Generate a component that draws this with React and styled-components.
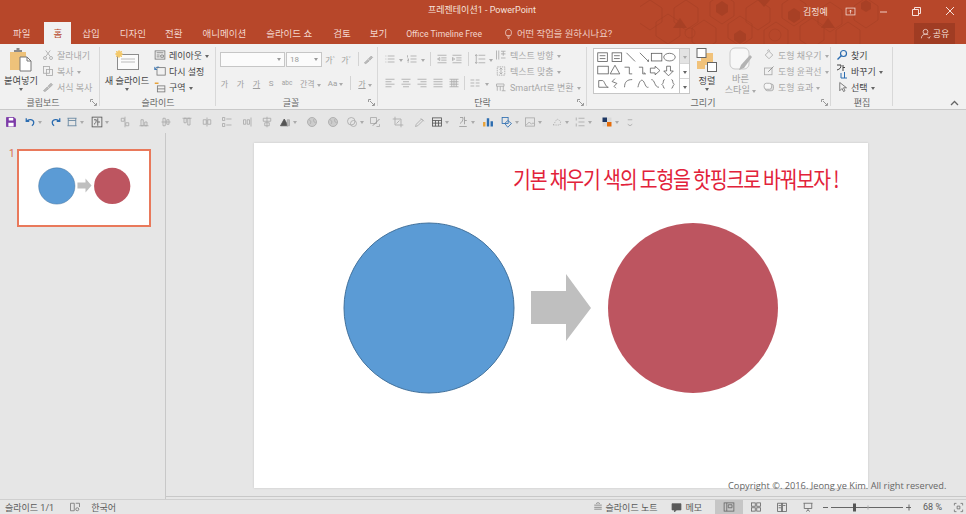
import React from 'react'
import styled, { createGlobalStyle } from 'styled-components'

const GlobalStyle = createGlobalStyle`
  html, body { margin: 0; padding: 0; background: #e6e6e6; }
  body { font-family: Roboto, "Noto Sans CJK KR", "Noto Sans", sans-serif; }
`

const Window = styled.div`
  width: 966px;
  height: 514px;
  display: flex;
  flex-direction: column;
  overflow: hidden;
  color: #444;
`

const TitleBar = styled.div`
  position: relative;
  height: 22px;
  flex: none;
  background: #b7472a;
  display: flex;
  align-items: center;
  justify-content: flex-end;
  color: #f6e2dc;
  font-size: 9px;
`

const Honey = styled.svg`
  position: absolute;
  left: 640px;
  top: 0;
  width: 250px;
  height: 44px;
  z-index: 1;
  pointer-events: none;
`

const TitleText = styled.div`
  position: absolute;
  left: 428px;
  top: 4px;
  line-height: 13px;
  white-space: nowrap;
  z-index: 2;
`

const TitleControls = styled.div`
  display: flex;
  align-items: center;
  z-index: 2;
`

const UserName = styled.span`
  width: 31px;
`

const WinButton = styled.div`
  width: 33px;
  display: flex;
  justify-content: center;
`

const TabRow = styled.div`
  height: 22px;
  flex: none;
  background: #b7472a;
  display: flex;
  align-items: stretch;
  padding-left: 3px;
  position: relative;
`

const Tab = styled.div`
  position: relative;
  z-index: 2;
  padding: 0 ${p => p.$pad ?? 10}px;
  margin-right: ${p => p.$gap ?? 0}px;
  font-size: ${p => p.$size ?? 9.5}px;
  line-height: 24px;
  white-space: nowrap;
  color: ${p => (p.$active ? '#b7472a' : '#f3d6cd')};
  background: ${p => (p.$active ? '#f1f1f1' : 'transparent')};
`

const TellMe = styled.div`
  display: flex;
  align-items: center;
  gap: 3px;
  margin-left: 11px;
  font-size: 9.4px;
  color: #f0cdc2;
  z-index: 2;
`

const ShareButton = styled.div`
  position: absolute;
  z-index: 2;
  right: 11px;
  top: 1px;
  width: 41px;
  height: 21px;
  background: #a03c23;
  color: #f6e2dc;
  font-size: 9px;
  display: flex;
  align-items: center;
  justify-content: center;
  gap: 2px;
`

const Ribbon = styled.div`
  position: relative;
  height: 66px;
  flex: none;
  background: #f1f1f1;
  border-bottom: 1px solid #c9c9c9;
  box-sizing: border-box;
  display: flex;
`

const Group = styled.div`
  width: ${p => p.$w}px;
  flex: none;
  box-sizing: border-box;
  display: flex;
  flex-direction: column;
  padding-top: 3px;
  position: relative;
  &::after {
    content: '';
    position: absolute;
    right: 0;
    top: 3px;
    bottom: 3px;
    width: 1px;
    background: #d8d8d8;
  }
`

const GroupBody = styled.div`
  flex: 1;
  min-height: 0;
  display: flex;
  gap: ${p => p.$gap ?? 0}px;
  padding-left: ${p => p.$left ?? 0}px;
`

const GroupLabel = styled.div`
  height: 14px;
  flex: none;
  line-height: 16px;
  text-align: center;
  font-size: 9px;
  color: #666;
  position: relative;
  padding-right: ${p => p.$shift ?? 0}px;
`

const Launcher = styled.svg`
  position: absolute;
  right: 3px;
  top: 4px;
  width: 7px;
  height: 7px;
`

const BigButton = styled.div`
  width: ${p => p.$w}px;
  flex: none;
  display: flex;
  flex-direction: column;
  align-items: center;
  font-size: 9.2px;
  line-height: 11px;
  text-align: center;
  white-space: nowrap;
  color: ${p => (p.$off ? '#a2a2a2' : '#444')};
`

const BigIcon = styled.div`
  height: 26px;
  display: flex;
  align-items: center;
  margin-bottom: 2px;
`

const Stack = styled.div`
  display: flex;
  flex-direction: column;
  padding-top: ${p => p.$top ?? 0}px;
  margin-left: ${p => p.$left ?? 0}px;
`

const SmallRow = styled.div`
  height: 16px;
  display: flex;
  align-items: center;
  gap: 3px;
  white-space: nowrap;
  font-size: 9px;
  color: ${p => (p.$off ? '#a8a8a8' : '#444')};
`

const ToolRow = styled.div`
  height: ${p => p.$h ?? 26}px;
  display: flex;
  align-items: center;
  gap: ${p => p.$gap ?? 3}px;
  white-space: nowrap;
  font-size: 8px;
  color: #a0a0a0;
`

const Field = styled.div`
  width: ${p => p.$w}px;
  height: 15px;
  box-sizing: border-box;
  border: 1px solid #c6c6c6;
  background: #fbfbfb;
  font-size: 8px;
  line-height: 13px;
  padding-left: 3px;
  color: #9a9a9a;
  position: relative;
  &::after {
    content: '';
    position: absolute;
    right: 3px;
    top: 5px;
    border: 2px solid transparent;
    border-top: 3px solid #999;
  }
`

const Glyph = styled.span`
  width: ${p => p.$w ?? 9}px;
  font-size: ${p => p.$size ?? 8}px;
  text-align: center;
  text-decoration: ${p => (p.$under ? 'underline' : 'none')};
`

const Sep = styled.div`
  width: 1px;
  height: 14px;
  margin: 0 ${p => p.$m ?? 2}px;
  background: #d3d3d3;
`

const Caret = styled.span`
  display: inline-block;
  width: 0;
  height: 0;
  flex: none;
  margin-top: 2px;
  border: 2px solid transparent;
  border-bottom-width: 0;
  border-top: 3px solid ${p => (p.$off ? '#ababab' : '#666')};
`

const GalleryWrap = styled.div`
  display: flex;
  height: 46px;
  margin-top: 1px;
`

const Gallery = styled.svg`
  width: 87px;
  height: 46px;
  background: #fff;
  border: 1px solid #c6c6c6;
  box-sizing: border-box;
`

const GalleryScroll = styled.div`
  width: 10px;
  display: flex;
  flex-direction: column;
  border: 1px solid #c6c6c6;
  border-left: 0;
  box-sizing: border-box;
`

const ScrollCell = styled.div`
  flex: 1;
  display: flex;
  align-items: center;
  justify-content: center;
  background: ${p => (p.$off ? '#e3e3e3' : '#fff')};
  & + & { border-top: 1px solid #d6d6d6; }
`

const Collapse = styled.svg`
  position: absolute;
  right: 7px;
  bottom: 3px;
  width: 9px;
  height: 6px;
`

const Qat = styled.div`
  height: 23px;
  flex: none;
  background: #e6e6e6;
  display: flex;
  align-items: center;
  padding-left: 5px;
`

const QatItem = styled.div`
  width: ${p => p.$w}px;
  flex: none;
  display: flex;
  align-items: center;
  gap: 2px;
`

const Main = styled.div`
  flex: 1;
  min-height: 0;
  display: flex;
  background: #e6e6e6;
`

const Sidebar = styled.div`
  width: 166px;
  flex: none;
  box-sizing: border-box;
  border-right: 1px solid #c8c8c8;
  display: flex;
  align-items: flex-start;
  padding: 16px 0 0 9px;
  gap: 2px;
`

const SlideNo = styled.div`
  width: 6px;
  font-size: 10px;
  line-height: 12px;
  margin-top: -1px;
  color: #d9694a;
`

const Thumb = styled.svg`
  width: 134px;
  height: 78px;
  box-sizing: border-box;
  border: 2.5px solid #e9795b;
  background: #fff;
`

const Stage = styled.div`
  flex: 1;
  display: flex;
  align-items: flex-start;
  padding: 10px 0 0 88px;
  margin-bottom: 2px;
  border-bottom: 1px solid #c8c8c8;
`

const Slide = styled.div`
  position: relative;
  width: 614px;
  height: 345px;
  background: #fff;
  box-shadow: 0 0 2px #c4c4c4;
`

const SlideArt = styled.svg`
  display: block;
  width: 614px;
  height: 345px;
`

const Headline = styled.div`
  position: absolute;
  left: 259px;
  top: 18px;
  font-family: "Noto Sans CJK KR", sans-serif;
  font-size: 23px;
  line-height: 34px;
  letter-spacing: -1.35px;
  white-space: nowrap;
  color: #e2223a;
  transform: scaleX(0.844);
  transform-origin: left center;
`

const Copyright = styled.div`
  position: absolute;
  left: 474px;
  top: 336px;
  font-family: "Open Sans", "Noto Sans", sans-serif;
  font-size: 9.25px;
  line-height: 14px;
  white-space: nowrap;
  color: #666;
`

const StatusBar = styled.div`
  height: 15px;
  flex: none;
  background: #e6e6e6;
  border-top: 1px solid #cfcfcf;
  box-sizing: border-box;
  display: flex;
  justify-content: space-between;
  align-items: center;
  font-size: 9px;
  color: #5a5a5a;
`

const StatusSide = styled.div`
  display: flex;
  align-items: center;
  height: 100%;
  padding-left: ${p => p.$left ?? 0}px;
`

const StatusText = styled.span`
  display: flex;
  align-items: center;
  gap: 3px;
  margin-left: ${p => p.$before ?? 0}px;
  margin-right: ${p => p.$gap ?? 0}px;
  white-space: nowrap;
`

const ViewButton = styled.div`
  width: ${p => p.$w ?? 26}px;
  height: 100%;
  display: flex;
  align-items: center;
  justify-content: center;
  background: ${p => (p.$on ? '#c6c6c6' : 'transparent')};
`

const ZoomSlider = styled.svg`
  width: 90px;
  height: 11px;
  margin: 0 12px 0 0;
`

/* small icon drawings, viewBox 16 */
const paths = {
  cut: <><circle cx="4" cy="12" r="2" /><circle cx="12" cy="12" r="2" /><path d="M5 10 11 2M11 10 5 2" /></>,
  copy: <><rect x="2" y="2" width="8" height="9" /><rect x="6" y="6" width="8" height="8" /></>,
  brush: <path d="M2 13 7 8l2 2-5 4zM8 7l4-4 2 2-4 4z" fill="#bbb" />,
  layout: <><rect x="1.500" y="2.500" width="13" height="11" /><path d="M3.500 5h9M3.500 8h4M3.500 10.500h4M9 8h3.500v3H9z" /></>,
  reset: <><rect x="4" y="3.500" width="11" height="10" /><path d="M1 6c1-3 4-4 6-3M1 2.500V6h3" stroke="#2b6cb0" /></>,
  section: <><rect x="4.500" y="6.500" width="10" height="8" /><path d="M4.500 10.500h10" /><path d="M1 3h5" stroke="#e8a33a" strokeWidth="2" /></>,
  find: <><circle cx="10" cy="6" r="4" stroke="#2b6cb0" strokeWidth="1.600" /><path d="M7 9 2 14" stroke="#2b6cb0" strokeWidth="2" /></>,
  cursor: <path d="M5 2v11l3-3 2 4 2-1-2-4h4z" />,
  fill: <><path d="m3 8 5-5 5 5-5 5z" /><path d="M6 3c0-3 3-2 3 0" /></>,
  outline: <><rect x="2" y="4" width="10" height="9" /><path d="m7 9 7-7" stroke="#888" /></>,
  effect: <><rect x="3" y="4" width="11" height="9" rx="3" fill="#ddd" /><rect x="1.500" y="3" width="10" height="8" rx="3" fill="#f6f6f6" /></>,
  bullets: <path d="M2 4h1M2 8h1M2 12h1M5 4h9M5 8h9M5 12h9" />,
  numbers: <path d="M2 3v3M2 8h2l-2 2h2M2 12h2M6 4h8M6 8h8M6 12h8" />,
  indentL: <path d="M2 3h12M7 6.500h7M7 9.500h7M2 13h12M5 6 2 8l3 2z" />,
  indentR: <path d="M2 3h12M7 6.500h7M7 9.500h7M2 13h12M2 6l3 2-3 2z" />,
  spacing: <path d="M6 3h9M6 8h9M6 13h9M3 2v12M1.500 4 3 2l1.500 2M1.500 12 3 14l1.500-2" />,
  alignL: <path d="M2 3h12M2 6.300h8M2 9.600h12M2 13h8" />,
  alignC: <path d="M2 3h12M4 6.300h8M2 9.600h12M4 13h8" />,
  alignR: <path d="M2 3h12M6 6.300h8M2 9.600h12M6 13h8" />,
  justify: <path d="M2 3h12M2 6.300h12M2 9.600h12M2 13h12" />,
  dist: <path d="M2 3h12M2 6.300h12M2 9.600h12M2 13h12M5 3v10M8 3v10M11 3v10" />,
  columns: <path d="M2 4h5M9 4h5M2 8h5M9 8h5M2 12h5M9 12h5" />,
  textDir: <path d="M2 2v12M5 2v12M8 3h6M8 6.500h6M11 3v6M8 12h6" />,
  textFit: <><path d="M3 2.500h10v11H3z" strokeDasharray="2 1" /><path d="M8 4v8M6 6l2-2 2 2M6 10l2 2 2-2" /></>,
  smart: <path d="M2 4h10v3H2zM3 7v6M7 7v6M11 7v6M9 13h5" />,
  notes: <path d="M2 5h12M5 2.500 8 1l3 1.500M2 8.500h12M2 11.500h12" />,
  comment: <path d="M1.500 2.500h13v9H8l-3 3v-3H1.500z" fill="#5a5a5a" stroke="#5a5a5a" />,
  book: <><path d="M2 3h5v10H2zM9 3h5v5" /><circle cx="11" cy="11" r="2" /></>,
  normal: <><rect x="1.500" y="2.500" width="13" height="11" /><path d="M5 2.500v11M7 5h5v4H7z" /></>,
  sorter: <><rect x="2" y="2.500" width="5" height="4.500" /><rect x="9" y="2.500" width="5" height="4.500" /><rect x="2" y="9" width="5" height="4.500" /><rect x="9" y="9" width="5" height="4.500" /></>,
  reading: <path d="M8 3v11M2 3h6v11H2zM8 3h6v11H8zM3.500 6h3M3.500 9h3M9.500 6h3" />,
  present: <path d="M2 3h12M3 3v7h10V3M8 10v2M5.500 14 8 12l2.500 2" />,
  fit: <path d="M2 5V2h3M11 2h3v3M14 11v3h-3M5 14H2v-3M6 6h4v4H6z" />,
  ribbonMode: <><rect x="1.500" y="3" width="13" height="10" /><path d="M8 11V6M6 8l2-2 2 2" /></>,
  share: <><circle cx="8" cy="5.500" r="3.500" /><path d="M2 15c0-4 3-6 6-6 2 0 3 .5 4 1M11 13l2 2 2-3" /></>,
  bulb: <path d="M5 11C3 8 3 2 8 2s5 6 3 9zM6 13h4M7 15h2" />,
  save: <><path d="M2 2h10l2 2v10H2z" fill="#7c3aa8" stroke="#7c3aa8" /><path d="M5 2.500h6V6H5z" fill="#fff" stroke="none" /><path d="M4.500 9h7v5h-7z" fill="#fff" stroke="none" /></>,
  undo: <path d="M3 3v4h4M3.500 7C6 3.500 13 4 13 9c0 2-1 3-2.500 4" stroke="#2b6cb0" strokeWidth="1.700" />,
  redo: <path d="M13 3v4H9M12.500 7C10 3.500 3 4 3 9c0 2 1 3 2.500 4" stroke="#2b6cb0" strokeWidth="1.700" />,
  slideBox: <path d="M2 3h12M2 13h12M3 3v10M13 3v10M3 6h10" stroke="#5d7f9c" />,
  textBox: <><rect x="1.500" y="1.500" width="13" height="13" stroke="#555" /><path d="M4 5h3c0 3-1 5-3 6M9 3v10M9 8h3" stroke="#555" /></>,
  align1: <path d="M8 1v14M3 3h4v4H3zM9 9h4v4H9z" />,
  align2: <path d="M2 13h12M4 5h3v8H4zM9 8h3v5H9z" />,
  align3: <path d="M2 8h12M4 3h3v10H4zM9 5h3v6H9z" />,
  align4: <path d="M2 3h12M4 3h3v6H4zM9 3h3v9H9z" />,
  align5: <path d="M8 2v12M3 5h4v6H3zM9 5h4v6H9z" />,
  align6: <path d="M2 2h3v4H2zM2 10h3v4H2zM7 4h7M7 12h7" />,
  align7: <path d="M2 5h3v6H2zM7 5h3v6H7zM12 2v12" />,
  align8: <path d="M3 3h10v4H3zM5 9h6v4H5zM8 1v14" />,
  shapes: <><path d="m2 13 5-9 5 9z" fill="#555" stroke="#555" /><path d="M11 5h3v8h-3z" fill="#bbb" /></>,
  globe: <><circle cx="8" cy="8" r="6" fill="#ccc" /><path d="M4 5c3 1 3 4 1 6M11 4c-2 2 0 5 2 5" /></>,
  ringed: <><circle cx="7" cy="7" r="5" /><circle cx="10" cy="10" r="4" /></>,
  photo: <><path d="M2 2h8v8H2z" /><path d="m5 13 9-9" stroke="#888" /><path d="M10 14h4v-3" /></>,
  crop: <path d="M4 1v11h11M1 4h11v11M6 10l4-4" />,
  eyedrop: <path d="m2 14 1-3 7-7 2 2-7 7zM9 3l4 4" />,
  table: <><rect x="2" y="2.500" width="12" height="11" stroke="#555" /><path d="M2 6h12M2 9.500h12M6 6v7.500M10 6v7.500" stroke="#555" /></>,
  fontA: <path d="M4 2h4c0 4-1 6-4 8M10 1v10M10 6h3M3 14h10" stroke="#999" />,
  chart: <><path d="M3 14V8" strokeWidth="3.200" stroke="#e8a33a" /><path d="M8 14V3M13 14V7" strokeWidth="3.200" stroke="#2b6cb0" /></>,
  shapeFx: <><rect x="1.500" y="2" width="8" height="8" stroke="#2b6cb0" /><path d="m9 6 5 4-5 5-4-5z" stroke="#2b6cb0" /></>,
  image: <><rect x="2" y="2.500" width="12" height="11" /><path d="m3 12 4-4 3 3 2-2 2 2" /></>,
  nodes: <path d="M3 12 8 4l5 3M3 12h9l1-5" strokeDasharray="1.500 1.500" />,
  lines: <path d="M6 3h8M6 8h8M6 13h8M3 2v4M3 10v4" />,
  more: <path d="M5 5h6M5 11l3 2 3-2" />,
  palette: <><rect x="2" y="2" width="6" height="6" fill="#1f3864" stroke="none" /><rect x="8" y="2" width="6" height="6" fill="#d9d9d9" stroke="none" /><rect x="2" y="8" width="6" height="6" fill="#d9d9d9" stroke="none" /><rect x="8" y="8" width="6" height="6" fill="#e46c0a" stroke="none" /></>,
}

const Ic = ({ n, s = 12, c = '#a9a9a9' }) => (
  <svg width={s} height={s} viewBox="0 0 16 16" fill="none" stroke={c} strokeWidth="1.100" style={{ flex: 'none' }}>
    {paths[n]}
  </svg>
)

const PasteIcon = () => (
  <svg width="24" height="24" viewBox="0 0 24 24">
    <rect x="1" y="4" width="16" height="18" fill="#eec27a" />
    <path d="M5 4h8V2h-2.500V0h-3v2H5z" fill="#8a8a8a" />
    <path d="M11 9h7l4 4v10H11z" fill="#fff" stroke="#777" />
    <path d="M18 9v4h4" fill="none" stroke="#777" />
  </svg>
)

const NewSlideIcon = () => (
  <svg width="24" height="20" viewBox="0 0 24 20">
    <rect x="2.500" y="4.500" width="21" height="15" fill="#fbfbfb" stroke="#8c8c8c" />
    <path d="M6 9h14M6 12h14" stroke="#bbb" />
    <circle cx="4" cy="4" r="3" fill="#f4c96b" />
    <path d="M4 0v8M0 4h8M1 1l6 6M7 1 1 7" stroke="#f4c96b" />
  </svg>
)

const ArrangeIcon = () => (
  <svg width="22" height="24" viewBox="0 0 22 24">
    <rect x="5" y="5" width="12" height="12" fill="#f1c27a" />
    <rect x="1" y="0.500" width="9" height="9" fill="#fff" stroke="#666" />
    <rect x="1" y="13" width="8" height="8" fill="#f1c27a" />
    <rect x="11.500" y="14.500" width="9" height="9" fill="#fff" stroke="#666" />
  </svg>
)

const QuickStyleIcon = () => (
  <svg width="24" height="24" viewBox="0 0 24 24">
    <rect x="1" y="1" width="19" height="21" rx="5" fill="#f7f7f7" stroke="#c9c9c9" />
    <path d="m12 18 9-10 2 2-8 11-5 2z" fill="#b3b3b3" />
  </svg>
)

const ReplaceIcon = () => (
  <svg width="12" height="15" viewBox="0 0 12 15" fill="none">
    <path d="M1 1h4c0 3-1 4-4 5M7 1v6M7 3.500h2" stroke="#444" />
    <path d="M5 9v5h6M8.500 8v6" stroke="#2b6cb0" />
  </svg>
)

const Launch = () => (
  <Launcher viewBox="0 0 7 7" fill="none" stroke="#999">
    <path d="M.5 3V.5H3M6.500 4v2.500H4M2 2l4 4" />
  </Launcher>
)

const qatItems = [
  ['save', 19], ['undo', 26, 1], ['redo', 16], ['slideBox', 25, 1], ['textBox', 28, 1],
  ['align1', 19], ['align2', 22], ['align3', 21], ['align4', 20], ['align5', 20],
  ['align6', 21], ['align7', 19], ['align8', 18], ['shapes', 27, 1], ['globe', 21],
  ['globe', 19], ['ringed', 23, 1], ['photo', 23], ['crop', 22], ['eyedrop', 17],
  ['table', 26, 1], ['fontA', 25, 1], ['chart', 19], ['shapeFx', 23, 1], ['image', 27, 1],
  ['nodes', 23, 1], ['lines', 27, 1], ['palette', 23, 1], ['more', 14],
]

const tabs = [
  ['파일', 10, 4], ['홈', 9, 11], ['삽입', 0, 20], ['디자인', 0, 19], ['전환', 0, 20],
  ['애니메이션', 0, 20], ['슬라이드 쇼', 0, 21], ['검토', 0, 19], ['보기', 0, 19], ['Office Timeline Free', 0, 10, 8.6],
]

export default function App() {
  return (
    <Window>
      <GlobalStyle />
      <TitleBar>
        <Honey viewBox="0 0 250 44" fill="none" stroke="#a63f25" strokeWidth=".8" strokeOpacity=".75">
          <path d="M10 0 22 8v14l-12 8L-2 22V8zM46 0l12 8v14l-12 8-12-8V8zM82 -6l12 8v14l-12 8-12-8V2zM118 0l12 8v14l-12 8-12-8V8zM154 -4l12 8v14l-12 8-12-8V4zM190 2l12 8v14l-12 8-12-8V10zM226 -2l12 8v14l-12 8-12-8V6z" />
          <path d="M28 14l12 8v14l-12 8-12-8V22zM64 20l12 8v14l-12 8-12-8V28zM100 16l12 8v14l-12 8-12-8V24zM136 22l12 8v14l-12 8-12-8V30zM172 18l12 8v14l-12 8-12-8V26zM208 22l12 8v14l-12 8-12-8V30z" />
          <g fill="#a63f25" stroke="none" opacity=".85">
            <path d="m40 18 7 10H33zM82 1l6 4v7l-6 4-6-4V5zM154 8l6 4v7l-6 4-6-4v-7zM226 0l5 3v6l-5 3-5-3V3zM188 18l7 10h-14zM100 30l6 4v6l-6 4-6-4v-6zM118 0h12l-6 7z" />
          </g>
          <circle cx="50" cy="33" r="5" />
          <circle cx="135" cy="35" r="6" />
        </Honey>
        <TitleText>프레젠테이션1 - PowerPoint</TitleText>
        <TitleControls>
          <UserName>김정예</UserName>
          <WinButton><Ic n="ribbonMode" s={11} c="#f6e2dc" /></WinButton>
          <WinButton>
            <svg width="9" height="9" stroke="#f0cdc2"><path d="M1 5h7" /></svg>
          </WinButton>
          <WinButton>
            <svg width="9" height="9" fill="none" stroke="#f6e2dc"><path d="M.5 2.500h6v6h-6zM2.500 2.500V.5h6v6H6.500" /></svg>
          </WinButton>
          <WinButton>
            <svg width="10" height="10" stroke="#f6e2dc"><path d="m1 1 8 8M9 1 1 9" /></svg>
          </WinButton>
        </TitleControls>
      </TitleBar>

      <TabRow>
        {tabs.map(([label, pad, gap, size]) => (
          <Tab key={label} $active={label === '홈'} $pad={pad} $gap={gap} $size={size}>{label}</Tab>
        ))}
        <TellMe><Ic n="bulb" s={11} c="#f6e2dc" />어떤 작업을 원하시나요?</TellMe>
        <ShareButton><Ic n="share" s={11} c="#f6e2dc" />공유</ShareButton>
      </TabRow>

      <Ribbon>
        <Group $w={100}>
          <GroupBody>
            <BigButton $w={42}>
              <BigIcon><PasteIcon /></BigIcon>붙여넣기<Caret />
            </BigButton>
            <Stack>
              <SmallRow $off><Ic n="cut" />잘라내기</SmallRow>
              <SmallRow $off><Ic n="copy" />복사 <Caret $off /></SmallRow>
              <SmallRow $off><Ic n="brush" />서식 복사</SmallRow>
            </Stack>
          </GroupBody>
          <GroupLabel $shift={14}>클립보드<Launch /></GroupLabel>
        </Group>

        <Group $w={116}>
          <GroupBody>
            <BigButton $w={54}>
              <BigIcon><NewSlideIcon /></BigIcon>새 슬라이드<Caret />
            </BigButton>
            <Stack>
              <SmallRow><Ic n="layout" c="#777" />레이아웃 <Caret /></SmallRow>
              <SmallRow><Ic n="reset" c="#777" />다시 설정</SmallRow>
              <SmallRow><Ic n="section" c="#777" />구역 <Caret /></SmallRow>
            </Stack>
          </GroupBody>
          <GroupLabel>슬라이드</GroupLabel>
        </Group>

        <Group $w={162}>
          <GroupBody $left={4}>
            <Stack>
              <ToolRow $gap={1}>
                <Field $w={65} />
                <Field $w={36}>18</Field>
                <Glyph $w={14}>가˄</Glyph>
                <Glyph $w={16}>가˅</Glyph>
                <Sep $m={3} />
                <Ic n="brush" s={11} />
              </ToolRow>
              <ToolRow $gap={7}>
                <Glyph>가</Glyph><Glyph>가</Glyph><Glyph $under>가</Glyph><Glyph $w={6}>S</Glyph>
                <Glyph $w={12} $size={6.5}>abc</Glyph>
                <span>간격 <Caret $off /></span>
                <span>Aa <Caret $off /></span>
                <Sep $m={0} />
                <span><u>가</u> <Caret $off /></span>
              </ToolRow>
            </Stack>
          </GroupBody>
          <GroupLabel $shift={12}>글꼴<Launch /></GroupLabel>
        </Group>

        <Group $w={209}>
          <GroupBody $left={6}>
            <Stack>
              <ToolRow>
                <Ic n="bullets" /><Caret $off /><Ic n="numbers" /><Caret $off />
                <Sep />
                <Ic n="indentL" /><Ic n="indentR" />
                <Sep />
                <Ic n="spacing" /><Caret $off />
              </ToolRow>
              <ToolRow $gap={4}>
                <Ic n="alignL" /><Ic n="alignC" /><Ic n="alignR" /><Ic n="justify" /><Ic n="dist" />
                <Sep $m={0} />
                <Ic n="columns" /><Caret $off />
              </ToolRow>
            </Stack>
            <Stack $left={2}>
              <SmallRow $off><Ic n="textDir" />텍스트 방향 <Caret $off /></SmallRow>
              <SmallRow $off><Ic n="textFit" />텍스트 맞춤 <Caret $off /></SmallRow>
              <SmallRow $off><Ic n="smart" />SmartArt로 변환 <Caret $off /></SmallRow>
            </Stack>
          </GroupBody>
          <GroupLabel>단락<Launch /></GroupLabel>
        </Group>

        <Group $w={244}>
          <GroupBody $left={6}>
            <GalleryWrap>
              <Gallery viewBox="0 0 87 46" fill="none" stroke="#555" strokeWidth=".8">
                <rect x="3" y="4" width="10" height="9" />
                <rect x="18" y="4" width="10" height="9" />
                <path d="M5 7h6M5 10h6M20 7h6M20 10h6M33 4l9 9M47 4l9 9M55 13l1 0 0-2" />
                <rect x="59" y="4.500" width="11" height="8" />
                <ellipse cx="78" cy="8.500" rx="6" ry="4" />
                <rect x="3" y="18" width="11" height="8" />
                <path d="m21 17 5 9H16zM31 19h5v7h3M46 19h4v7h3l-2-1.500M58 20h5v-2l5 4.500-5 4.500v-2h-5zM75 18h4v5h3l-5 5-5-5h3z" />
                <path d="M4 40v-7h4c2 0 3 7 6 7zM21 31l-3 3 5 2-3 3 2 2M31 40c0-6 3-8 8-8M45 40c2-9 5-9 7-4s3 4 4 4M59 32c4 0 3 8 8 8M73 32c-2 0-1 3-2 4l-1 1 1 1c1 1 0 3 2 3M80 32c2 0 1 3 2 4l1 1-1 1c-1 1 0 3-2 3" />
              </Gallery>
              <GalleryScroll>
                <ScrollCell $off><Caret $off /></ScrollCell>
                <ScrollCell><Caret /></ScrollCell>
                <ScrollCell><Caret /></ScrollCell>
              </GalleryScroll>
            </GalleryWrap>
            <BigButton $w={34}>
              <BigIcon><ArrangeIcon /></BigIcon>정렬<Caret />
            </BigButton>
            <BigButton $w={33} $off>
              <BigIcon><QuickStyleIcon /></BigIcon>
              <span>바른</span>
              <span>스타일 <Caret $off /></span>
            </BigButton>
            <Stack $left={6}>
              <SmallRow $off><Ic n="fill" />도형 채우기 <Caret $off /></SmallRow>
              <SmallRow $off><Ic n="outline" />도형 윤곽선 <Caret $off /></SmallRow>
              <SmallRow $off><Ic n="effect" />도형 효과 <Caret $off /></SmallRow>
            </Stack>
          </GroupBody>
          <GroupLabel $shift={12}>그리기<Launch /></GroupLabel>
        </Group>

        <Group $w={62}>
          <GroupBody $left={5}>
            <Stack>
              <SmallRow><Ic n="find" />찾기</SmallRow>
              <SmallRow><ReplaceIcon />바꾸기 <Caret /></SmallRow>
              <SmallRow><Ic n="cursor" c="#666" />선택 <Caret /></SmallRow>
            </Stack>
          </GroupBody>
          <GroupLabel>편집</GroupLabel>
        </Group>

        <Collapse viewBox="0 0 9 6" fill="none" stroke="#666" strokeWidth="1.300"><path d="m1 5 3.500-3.500L8 5" /></Collapse>
      </Ribbon>

      <Qat>
        {qatItems.map(([n, w, caret], i) => (
          <QatItem key={i} $w={w}>
            <Ic n={n} />
            {caret ? <Caret $off /> : null}
          </QatItem>
        ))}
      </Qat>

      <Main>
        <Sidebar>
          <SlideNo>1</SlideNo>
          <Thumb viewBox="0 0 129 73">
            <circle cx="37.500" cy="34.500" r="18" fill="#5b9bd5" stroke="#41719c" strokeWidth=".5" />
            <path d="M58 31h8v-4l6 7-6 7v-4h-8z" fill="#bfbfbf" />
            <circle cx="92.500" cy="34.500" r="18" fill="#bd5560" />
          </Thumb>
        </Sidebar>
        <Stage>
          <Slide>
            <SlideArt viewBox="0 0 614 345">
              <circle cx="175" cy="165" r="85" fill="#5b9bd5" stroke="#41719c" />
              <path d="M277 148h35v-17l25 34-25 33v-17h-35z" fill="#bfbfbf" />
              <circle cx="439" cy="165" r="85" fill="#bd5560" />
            </SlideArt>
            <Headline>기본 채우기 색의 도형을 핫핑크로 바꿔보자 !</Headline>
            <Copyright>Copyright ©. 2016. Jeong ye Kim. All right reserved.</Copyright>
          </Slide>
        </Stage>
      </Main>

      <StatusBar>
        <StatusSide $left={5}>
          <StatusText $gap={15}>슬라이드 1/1</StatusText>
          <Ic n="book" c="#777" />
          <StatusText $before={10}>한국어</StatusText>
        </StatusSide>
        <StatusSide>
          <StatusText $gap={14}><Ic n="notes" s={10} c="#666" />슬라이드 노트</StatusText>
          <StatusText $gap={13}><Ic n="comment" s={11} />메모</StatusText>
          <ViewButton $on $w={28}><Ic n="normal" c="#666" /></ViewButton>
          <ViewButton><Ic n="sorter" c="#666" /></ViewButton>
          <ViewButton><Ic n="reading" c="#666" /></ViewButton>
          <ViewButton><Ic n="present" c="#666" /></ViewButton>
          <ZoomSlider viewBox="0 0 90 11" fill="none" stroke="#666">
            <path d="M2 5.500h5M10 5.500h72M85 5.500h6M88 2.500v6" strokeWidth="1" />
            <rect x="32" y="1.500" width="3" height="8" fill="#555" stroke="none" />
            <path d="M47 3.500v4" stroke="#aaa" />
          </ZoomSlider>
          <StatusText $gap={9}>68 %</StatusText>
          <ViewButton $w={15}><Ic n="fit" s={11} c="#666" /></ViewButton>
        </StatusSide>
      </StatusBar>
    </Window>
  )
}
